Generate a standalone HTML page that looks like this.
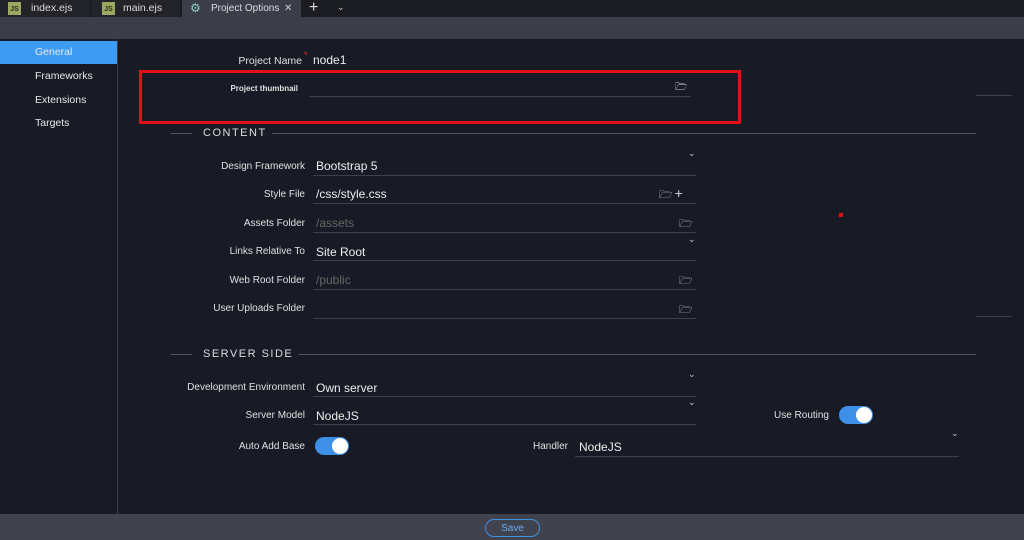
<!DOCTYPE html>
<html><head><style>
*{margin:0;padding:0;box-sizing:border-box}
body{width:1024px;height:540px;background:#181a25;font-family:"Liberation Sans",sans-serif;color:#e6e6e6;position:relative;overflow:hidden;font-size:11px}
.a{position:absolute}
.tabs{left:0;top:0;width:1024px;height:17px;background:#1c1d22}
.tab{top:0;height:17px;background:#23242a;color:#ddd;font-size:10.5px;line-height:17px}
.js{width:13px;height:13px;top:2px;background:#9aa862;color:#2a2a1a;font-size:7px;font-weight:bold;line-height:16px;text-align:center}
.strip{left:0;top:17px;width:1024px;height:22px;background:#3b3e49}
.side{left:0;top:39px;width:118px;height:475px;border-right:1px solid #3a3d48}
.si{left:35px;font-size:10.5px;color:#e8e8e8}
.lbl{font-size:10px;color:#e0e0e0;text-align:right;width:200px}
.val{font-size:12px;color:#eee}
.line{height:1px;background:#3d404b}
.sec{font-size:11px;letter-spacing:1.5px;color:#ddd}
.tg{width:34px;height:18px;border-radius:9px;background:#3d8fe8}
.tg::after{content:"";position:absolute;right:1px;top:1px;width:16px;height:16px;border-radius:50%;background:#fff}
.chev{font-size:9px;color:#ccc}
</style></head><body>
<div class="a tabs"></div>
<div class="a tab" style="left:0;width:90px"><div class="a js" style="left:8px">JS</div><span class="a" style="left:31px">index.ejs</span></div>
<div class="a tab" style="left:92px;width:88px"><div class="a js" style="left:10px">JS</div><span class="a" style="left:31px">main.ejs</span></div>
<div class="a tab" style="left:182px;width:119px;background:#3b3e49"><span class="a" style="left:8px;color:#8fd0c8;font-size:12px">⚙</span><span class="a" style="left:29px;font-size:10px">Project Options</span><span class="a" style="left:102px;color:#ccc;font-size:10px">✕</span></div>
<div class="a" style="left:309px;top:-1px;font-size:16px;color:#ddd">+</div>
<div class="a" style="left:337px;top:2px;font-size:9px;color:#ccc">⌄</div>
<div class="a strip"></div>
<div class="a side"></div>
<div class="a" style="left:0;top:41px;width:117px;height:23px;background:#3e9cf5"></div>
<div class="a si" style="top:46px">General</div>
<div class="a si" style="top:70px">Frameworks</div>
<div class="a si" style="top:94px">Extensions</div>
<div class="a si" style="top:117px">Targets</div>

<div class="a lbl" style="left:102px;top:55px;font-size:10.5px">Project Name</div>
<div class="a" style="left:304px;top:50px;color:#e03030;font-size:9px">*</div>
<div class="a val" style="left:313px;top:53px">node1</div>
<div class="a" style="left:139px;top:70px;width:602px;height:54px;border:3px solid #e3101a"></div>
<div class="a lbl" style="left:98px;top:84px;font-size:8px;font-weight:bold">Project thumbnail</div>
<div class="a line" style="left:309px;top:96px;width:382px"></div>
<div class="a" style="left:675px;top:80px;font-size:10px;color:#ccc">🗁</div>
<div class="a line" style="left:976px;top:95px;width:36px"></div>

<div class="a line" style="left:171px;top:133px;width:21px;background:#555"></div>
<div class="a sec" style="left:203px;top:127px">CONTENT</div>
<div class="a line" style="left:272px;top:133px;width:704px;background:#555"></div>

<div class="a lbl" style="left:105px;top:161px">Design Framework</div>
<div class="a val" style="left:316px;top:159px">Bootstrap 5</div>
<div class="a chev" style="left:688px;top:148px">⌄</div>
<div class="a line" style="left:313px;top:175px;width:383px"></div>

<div class="a lbl" style="left:105px;top:189px">Style File</div>
<div class="a val" style="left:316px;top:187px">/css/style.css</div>
<div class="a" style="left:659px;top:185px;color:#ccc;font-size:11px">🗁<span style="font-size:14px;margin-left:2px">+</span></div>
<div class="a line" style="left:313px;top:203px;width:383px"></div>

<div class="a lbl" style="left:105px;top:218px">Assets Folder</div>
<div class="a val" style="left:316px;top:216px;color:#666">/assets</div>
<div class="a" style="left:679px;top:215px;color:#ccc">🗁</div>
<div class="a line" style="left:313px;top:232px;width:383px"></div>

<div class="a lbl" style="left:105px;top:246px">Links Relative To</div>
<div class="a val" style="left:316px;top:245px">Site Root</div>
<div class="a chev" style="left:688px;top:234px">⌄</div>
<div class="a line" style="left:313px;top:260px;width:383px"></div>

<div class="a lbl" style="left:105px;top:275px">Web Root Folder</div>
<div class="a val" style="left:316px;top:273px;color:#666">/public</div>
<div class="a" style="left:679px;top:272px;color:#ccc">🗁</div>
<div class="a line" style="left:313px;top:289px;width:383px"></div>

<div class="a lbl" style="left:105px;top:303px">User Uploads Folder</div>
<div class="a" style="left:679px;top:301px;color:#ccc">🗁</div>
<div class="a line" style="left:313px;top:318px;width:383px"></div>
<div class="a line" style="left:976px;top:316px;width:36px"></div>
<div class="a" style="left:839px;top:213px;width:4px;height:4px;background:#e01010"></div>

<div class="a line" style="left:171px;top:354px;width:21px;background:#555"></div>
<div class="a sec" style="left:203px;top:348px">SERVER SIDE</div>
<div class="a line" style="left:299px;top:354px;width:677px;background:#555"></div>

<div class="a lbl" style="left:105px;top:382px">Development Environment</div>
<div class="a val" style="left:316px;top:381px">Own server</div>
<div class="a chev" style="left:688px;top:369px">⌄</div>
<div class="a line" style="left:313px;top:396px;width:383px"></div>

<div class="a lbl" style="left:105px;top:410px">Server Model</div>
<div class="a val" style="left:316px;top:409px">NodeJS</div>
<div class="a chev" style="left:688px;top:397px">⌄</div>
<div class="a line" style="left:313px;top:424px;width:383px"></div>
<div class="a lbl" style="left:629px;top:410px">Use Routing</div>
<div class="a tg" style="left:839px;top:406px"></div>

<div class="a lbl" style="left:105px;top:441px">Auto Add Base</div>
<div class="a tg" style="left:315px;top:437px"></div>
<div class="a lbl" style="left:368px;top:441px">Handler</div>
<div class="a val" style="left:579px;top:440px">NodeJS</div>
<div class="a chev" style="left:951px;top:428px">⌄</div>
<div class="a line" style="left:575px;top:456px;width:384px"></div>

<div class="a" style="left:0;top:514px;width:1024px;height:26px;background:#40434e"></div>
<div class="a" style="left:485px;top:519px;width:55px;height:18px;border:1px solid #3d8fe8;border-radius:9px;color:#6aa8ee;font-size:10px;text-align:center;line-height:18px">Save</div>
</body></html>
